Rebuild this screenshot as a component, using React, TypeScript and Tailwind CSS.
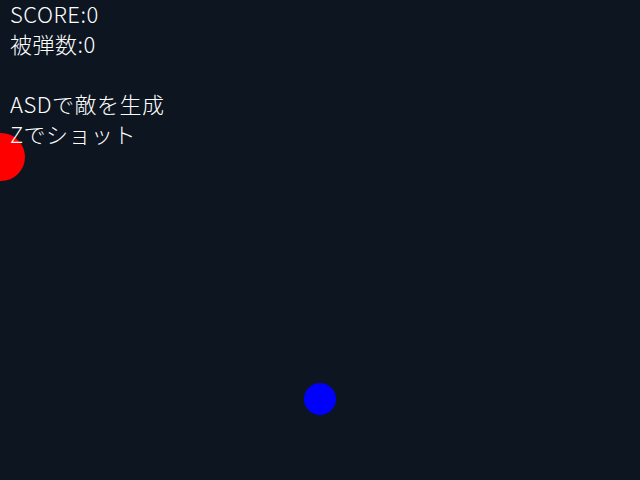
export default function App() {
  const lines = ["SCORE:0", "被弾数:0", "", "ASDで敵を生成", "Zでショット"];
  return (
    <div className="relative w-[640px] h-[480px] overflow-hidden bg-[#0c1520]">
      {/* enemy */}
      <div className="absolute left-[-23px] top-[133px] w-[48px] h-[48px] rounded-full bg-[#ff0000]" />
      {/* player */}
      <div className="absolute left-[304px] top-[383px] w-[32px] h-[32px] rounded-full bg-[#0000ff]" />
      <div
        className="relative pl-[10px] text-white text-[22px] leading-[26px] font-light tracking-[0.5px]"
        style={{ fontFamily: '"Noto Sans CJK JP", "Noto Sans", sans-serif' }}
      >
        {lines.map((t, i) => (
          <div key={i} className="h-[30px]">
            {t}
          </div>
        ))}
      </div>
    </div>
  );
}
